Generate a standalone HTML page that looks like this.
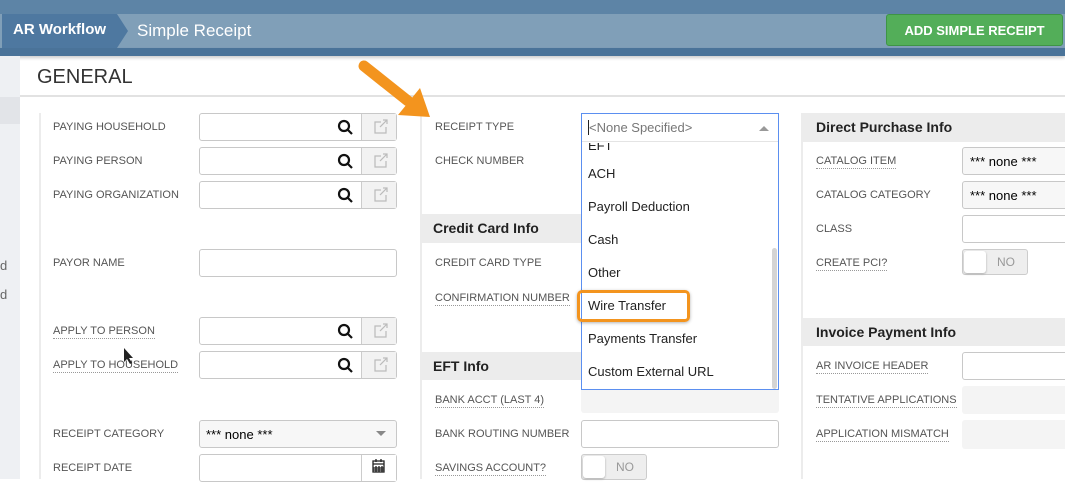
<!DOCTYPE html>
<html><head><meta charset="utf-8"><style>
*{box-sizing:border-box;margin:0;padding:0}
body{width:1065px;height:479px;overflow:hidden;background:#fff;font-family:"Liberation Sans",sans-serif;position:relative}
.a{position:absolute}
.lbl{position:absolute;font-size:11px;color:#555;text-transform:uppercase;letter-spacing:0;margin-top:1px}
.dot{border-bottom:1px dotted #999;padding-bottom:1px}
.inp{position:absolute;border:1px solid #c8c8c8;border-radius:3px;background:#fff;height:28px}
.sb{position:absolute;right:0;top:0;bottom:0;width:35px;background:#f2f2f2;border-left:1px solid #ccc}
.hdr{position:absolute;background:#ececec;font-weight:bold;font-size:14px;color:#222;padding-left:13px;line-height:28px}
.gray{position:absolute;background:#f4f4f4;border-radius:3px}
.opt{position:absolute;left:6px;font-size:13px;color:#222}
.tog{position:absolute;width:66px;height:26px;border:1px solid #ccc;border-radius:3px;background:#eee}
.tog i{position:absolute;left:1px;top:1px;width:22px;height:22px;background:#fff;border-radius:3px;box-shadow:0 1px 2px #aaa}
.tog b{position:absolute;left:34px;top:5px;font-size:12px;color:#999;font-weight:normal}
</style></head><body>
<div class="a" style="left:0;top:0;width:1065px;height:14px;background:#5d84a6"></div>
<div class="a" style="left:0;top:14px;width:1065px;height:34px;background:#809fb8"></div>
<div class="a" style="left:0;top:48px;width:1065px;height:8px;background:#4a7399;box-shadow:0 2px 3px rgba(0,0,0,.2)"></div>
<svg class="a" style="left:0;top:14px" width="132" height="34"><polygon points="2,0 117,0 128,17 117,34 2,34" fill="#4e78a0"/></svg>
<div class="a" style="left:13px;top:21px;color:#fff;font-weight:bold;font-size:15px">AR Workflow</div>
<div class="a" style="left:137px;top:21px;color:#fff;font-size:17px">Simple Receipt</div>
<div class="a" style="left:886px;top:14px;width:177px;height:32px;background:#53ae59;border:1px solid #3e9446;border-radius:3px;color:#fff;font-weight:bold;font-size:13px;text-align:center;line-height:31px">ADD SIMPLE RECEIPT</div>
<div class="a" style="left:0;top:56px;width:20px;height:423px;background:#eef0f3"></div>
<div class="a" style="left:0;top:97px;width:20px;height:27px;background:#e2e4e8"></div>
<div class="a" style="left:0;top:258px;font-size:13px;color:#666">d</div>
<div class="a" style="left:0;top:287px;font-size:13px;color:#666">d</div>
<div class="a" style="left:37px;top:66px;font-size:20px;color:#333">GENERAL</div>
<div class="a" style="left:20px;top:95px;width:1045px;height:2px;background:#e2e2e2"></div>
<div class="a" style="left:39px;top:113px;width:2px;height:366px;background:#ececec"></div>
<div class="a" style="left:420px;top:113px;width:2px;height:366px;background:#ececec"></div>
<div class="a" style="left:801px;top:113px;width:2px;height:366px;background:#ececec"></div>

<!-- left col -->
<div class="lbl" style="left:53px;top:120px">Paying Household</div>
<div class="lbl" style="left:53px;top:154px">Paying Person</div>
<div class="lbl" style="left:53px;top:188px">Paying Organization</div>
<div class="lbl" style="left:53px;top:256px">Payor Name</div>
<div class="lbl dot" style="left:53px;top:324px">Apply to Person</div>
<div class="lbl dot" style="left:53px;top:358px">Apply to Household</div>
<div class="lbl" style="left:53px;top:427px">Receipt Category</div>
<div class="lbl" style="left:53px;top:461px">Receipt Date</div>
<div class="inp" style="left:199px;top:113px;width:198px"><div class="sb"></div></div>
<div class="inp" style="left:199px;top:147px;width:198px"><div class="sb"></div></div>
<div class="inp" style="left:199px;top:181px;width:198px"><div class="sb"></div></div>
<div class="inp" style="left:199px;top:249px;width:198px"></div>
<div class="inp" style="left:199px;top:317px;width:198px"><div class="sb"></div></div>
<div class="inp" style="left:199px;top:351px;width:198px"><div class="sb"></div></div>
<div class="inp" style="left:199px;top:420px;width:198px;background:#f7f7f7"><span class="a" style="left:6px;top:6px;font-size:13px">*** none ***</span><span class="a" style="right:10px;top:10px;border:5px solid transparent;border-top:5px solid #888"></span></div>
<div class="inp" style="left:199px;top:454px;width:198px"><div class="sb" style="background:#fff"></div></div>
<svg class="a" style="left:0;top:0" width="1065" height="479">
<g fill="none" stroke="#111" stroke-width="2.2">
<circle cx="344" cy="126" r="5"/><line x1="348" y1="130" x2="352" y2="134"/>
<circle cx="344" cy="160" r="5"/><line x1="348" y1="164" x2="352" y2="168"/>
<circle cx="344" cy="194" r="5"/><line x1="348" y1="198" x2="352" y2="202"/>
<circle cx="344" cy="330" r="5"/><line x1="348" y1="334" x2="352" y2="338"/>
<circle cx="344" cy="364" r="5"/><line x1="348" y1="368" x2="352" y2="372"/>
</g>
<g fill="none" stroke="#bbb" stroke-width="1.2">
<path d="M381 122h-6v11h11v-6M380 127l7-7M383 120h4v4"/>
<path d="M381 156h-6v11h11v-6M380 161l7-7M383 154h4v4"/>
<path d="M381 190h-6v11h11v-6M380 195l7-7M383 188h4v4"/>
<path d="M381 326h-6v11h11v-6M380 331l7-7M383 324h4v4"/>
<path d="M381 360h-6v11h11v-6M380 365l7-7M383 358h4v4"/>
</g>
<g stroke="#222" fill="none" stroke-width="1.3"><rect x="373" y="461" width="11" height="11"/><path d="M373 464h11M376 466v6M379 466v6M382 466v6M373 468h11M373 470h11M376 459v3M381 459v3"/></g>
<path d="M124 348l0 14 3-3 3 5 2-1-3-5 4 0z" fill="#222"/>
</svg>

<!-- middle col -->
<div class="lbl" style="left:435px;top:120px">Receipt Type</div>
<div class="lbl" style="left:435px;top:154px">Check Number</div>
<div class="hdr" style="left:420px;top:214px;width:161px;height:29px">Credit Card Info</div>
<div class="lbl" style="left:435px;top:256px">Credit Card Type</div>
<div class="lbl dot" style="left:435px;top:291px">Confirmation Number</div>
<div class="hdr" style="left:420px;top:352px;width:161px;height:28px">EFT Info</div>
<div class="lbl dot" style="left:435px;top:393px">Bank Acct (Last 4)</div>
<div class="lbl" style="left:435px;top:427px">Bank Routing Number</div>
<div class="lbl dot" style="left:435px;top:461px">Savings Account?</div>
<div class="gray" style="left:581px;top:383px;width:198px;height:30px"></div>
<div class="inp" style="left:581px;top:420px;width:198px"></div>
<div class="tog" style="left:581px;top:454px"><i></i><b>NO</b></div>

<div class="a" style="left:581px;top:113px;width:198px;height:277px;border:1px solid #5b8ff0;background:#fff;overflow:hidden">
<div class="a" style="left:0;top:0;width:196px;height:28px;border-bottom:1px solid #e4e4e4;background:#fff"></div>
<div class="a" style="left:6px;top:6px;font-size:13px;color:#777;border-left:1px solid #222;padding-left:0">&lt;None Specified&gt;</div>
<span class="a" style="left:177px;top:7px;border:5px solid transparent;border-bottom:5px solid #999"></span>
<div class="opt" style="top:24px;clip-path:inset(5px 0 0 0)">EFT</div>
<div class="opt" style="top:52px">ACH</div>
<div class="opt" style="top:85px">Payroll Deduction</div>
<div class="opt" style="top:118px">Cash</div>
<div class="opt" style="top:151px">Other</div>
<div class="opt" style="top:184px">Wire Transfer</div>
<div class="opt" style="top:217px">Payments Transfer</div>
<div class="opt" style="top:250px">Custom External URL</div>
<div class="a" style="left:190px;top:134px;width:5px;height:141px;background:#d4d4d4;border-radius:3px"></div>
</div>
<div class="a" style="left:577px;top:290px;width:113px;height:32px;border:3px solid #f3941e;border-radius:5px;box-shadow:0 1px 3px rgba(0,0,0,.3)"></div>

<!-- right col -->
<div class="hdr" style="left:803px;top:113px;width:262px;height:29px">Direct Purchase Info</div>
<div class="lbl dot" style="left:816px;top:154px">Catalog Item</div>
<div class="lbl" style="left:816px;top:188px">Catalog Category</div>
<div class="lbl" style="left:816px;top:222px">Class</div>
<div class="lbl dot" style="left:816px;top:256px">Create PCI?</div>
<div class="inp" style="left:962px;top:147px;width:110px;background:#f7f7f7"><span class="a" style="left:7px;top:6px;font-size:13px">*** none ***</span></div>
<div class="inp" style="left:962px;top:181px;width:110px;background:#f7f7f7"><span class="a" style="left:7px;top:6px;font-size:13px">*** none ***</span></div>
<div class="inp" style="left:962px;top:215px;width:110px"></div>
<div class="tog" style="left:962px;top:249px"><i></i><b>NO</b></div>
<div class="hdr" style="left:803px;top:318px;width:262px;height:28px">Invoice Payment Info</div>
<div class="lbl dot" style="left:816px;top:359px">AR Invoice Header</div>
<div class="lbl dot" style="left:816px;top:393px">Tentative Applications</div>
<div class="lbl dot" style="left:816px;top:427px">Application Mismatch</div>
<div class="inp" style="left:962px;top:352px;width:110px"></div>
<div class="gray" style="left:962px;top:386px;width:110px;height:28px"></div>
<div class="gray" style="left:962px;top:420px;width:110px;height:29px"></div>

<svg class="a" style="left:0;top:0" width="1065" height="479">
<line x1="364" y1="66" x2="408" y2="101" stroke="#f3941e" stroke-width="11" stroke-linecap="round"/>
<polygon points="398,115 420,88 430,117" fill="#f3941e"/>
</svg>
</body></html>
